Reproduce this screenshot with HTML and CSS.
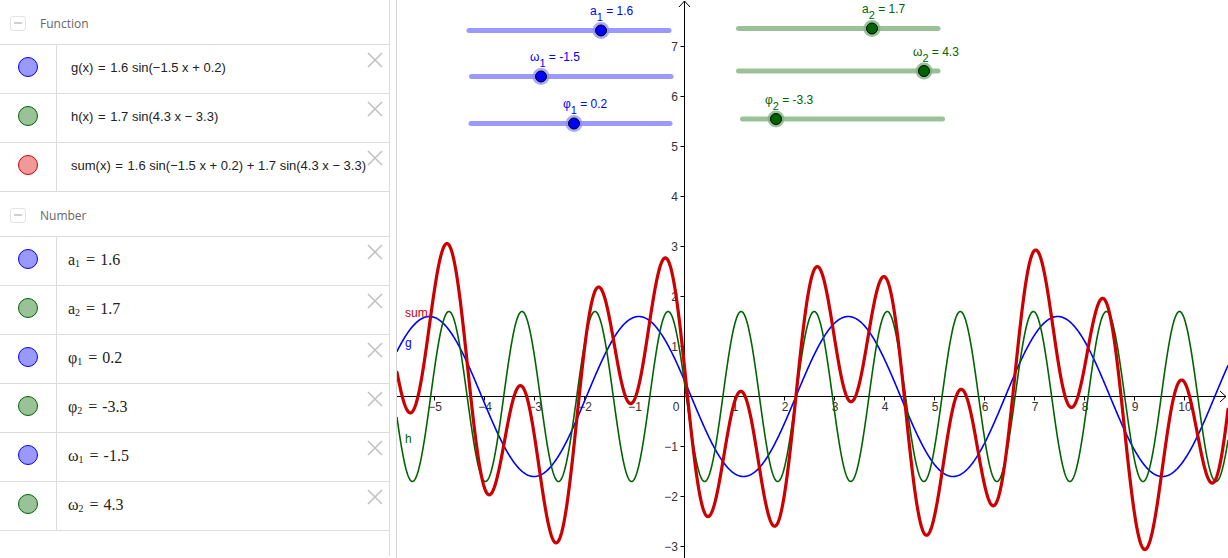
FILE: index.html
```html
<!DOCTYPE html>
<html>
<head>
<meta charset="utf-8">
<title>Sum of sines</title>
<link rel="stylesheet" href="styles.css">
</head>
<body>
<div class="app">
  <aside class="algebra">
    <div class="group-header">
      <span class="toggle"><span class="toggle-bar"></span></span>
      <span class="group-title">Function</span>
    </div>
    <div class="item">
      <div class="marble-cell"><span class="marble marble-blue"></span></div>
      <div class="item-text fn">g(x) <span class="eq">=</span> 1.6 sin(−1.5 x + 0.2)</div>
      <svg class="close" viewBox="0 0 16 16"><path d="M1 1L15 15M15 1L1 15"/></svg>
    </div>
    <div class="item">
      <div class="marble-cell"><span class="marble marble-green"></span></div>
      <div class="item-text fn">h(x) <span class="eq">=</span> 1.7 sin(4.3 x − 3.3)</div>
      <svg class="close" viewBox="0 0 16 16"><path d="M1 1L15 15M15 1L1 15"/></svg>
    </div>
    <div class="item">
      <div class="marble-cell"><span class="marble marble-red"></span></div>
      <div class="item-text fn">sum(x) <span class="eq">=</span> 1.6 sin(−1.5 x + 0.2) + 1.7 sin(4.3 x − 3.3)</div>
      <svg class="close" viewBox="0 0 16 16"><path d="M1 1L15 15M15 1L1 15"/></svg>
    </div>
    <div class="group-header">
      <span class="toggle"><span class="toggle-bar"></span></span>
      <span class="group-title">Number</span>
    </div>
    <div class="item">
      <div class="marble-cell"><span class="marble marble-blue"></span></div>
      <div class="item-text num">a<sub>1</sub><span class="eq">=</span>1.6</div>
      <svg class="close" viewBox="0 0 16 16"><path d="M1 1L15 15M15 1L1 15"/></svg>
    </div>
    <div class="item">
      <div class="marble-cell"><span class="marble marble-green"></span></div>
      <div class="item-text num">a<sub>2</sub><span class="eq">=</span>1.7</div>
      <svg class="close" viewBox="0 0 16 16"><path d="M1 1L15 15M15 1L1 15"/></svg>
    </div>
    <div class="item">
      <div class="marble-cell"><span class="marble marble-blue"></span></div>
      <div class="item-text num">φ<sub>1</sub><span class="eq">=</span>0.2</div>
      <svg class="close" viewBox="0 0 16 16"><path d="M1 1L15 15M15 1L1 15"/></svg>
    </div>
    <div class="item">
      <div class="marble-cell"><span class="marble marble-green"></span></div>
      <div class="item-text num">φ<sub>2</sub><span class="eq">=</span>-3.3</div>
      <svg class="close" viewBox="0 0 16 16"><path d="M1 1L15 15M15 1L1 15"/></svg>
    </div>
    <div class="item">
      <div class="marble-cell"><span class="marble marble-blue"></span></div>
      <div class="item-text num">ω<sub>1</sub><span class="eq">=</span>-1.5</div>
      <svg class="close" viewBox="0 0 16 16"><path d="M1 1L15 15M15 1L1 15"/></svg>
    </div>
    <div class="item">
      <div class="marble-cell"><span class="marble marble-green"></span></div>
      <div class="item-text num">ω<sub>2</sub><span class="eq">=</span>4.3</div>
      <svg class="close" viewBox="0 0 16 16"><path d="M1 1L15 15M15 1L1 15"/></svg>
    </div>
  </aside>
  <div class="splitter"></div>
  <main class="graphics">
    <svg class="canvas" width="831" height="558" viewBox="397 0 831 558">
      <g class="axis">
        <path d="M397 396.5H1226M1220 391L1226 396.5L1220 402"/>
        <path d="M684.5 558V1M679 7L684.5 1L690 7"/>
        <path d="M434.5 396.5v4M484.5 396.5v4M534.5 396.5v4M584.5 396.5v4M634.5 396.5v4M734.5 396.5v4M784.5 396.5v4M834.5 396.5v4M884.5 396.5v4M934.5 396.5v4M984.5 396.5v4M1034.5 396.5v4M1084.5 396.5v4M1134.5 396.5v4M1184.5 396.5v4"/>
        <path d="M684.5 46.5h-4M684.5 96.5h-4M684.5 146.5h-4M684.5 196.5h-4M684.5 246.5h-4M684.5 296.5h-4M684.5 346.5h-4M684.5 446.5h-4M684.5 496.5h-4M684.5 546.5h-4"/>
      </g>
      <g class="tick-x">
        <text x="435" y="411">−5</text>
        <text x="485" y="411">−4</text>
        <text x="535" y="411">−3</text>
        <text x="585" y="411">−2</text>
        <text x="635" y="411">−1</text>
        <text x="676" y="411">0</text>
        <text x="735" y="411">1</text>
        <text x="785" y="411">2</text>
        <text x="835" y="411">3</text>
        <text x="885" y="411">4</text>
        <text x="935" y="411">5</text>
        <text x="985" y="411">6</text>
        <text x="1035" y="411">7</text>
        <text x="1085" y="411">8</text>
        <text x="1135" y="411">9</text>
        <text x="1185" y="411">10</text>
      </g>
      <g class="tick-y">
        <text x="678" y="51">7</text>
        <text x="678" y="101">6</text>
        <text x="678" y="151">5</text>
        <text x="678" y="201">4</text>
        <text x="678" y="251">3</text>
        <text x="678" y="301">2</text>
        <text x="678" y="351">1</text>
        <text x="678" y="451">−1</text>
        <text x="678" y="501">−2</text>
        <text x="678" y="551">−3</text>
      </g>
      <path id="curve-g" class="curve curve-g" d=""/>
      <path id="curve-h" class="curve curve-h" d=""/>
      <path id="curve-sum" class="curve curve-sum" d=""/>
      <text class="curve-label label-sum" x="405" y="317">sum</text>
      <text class="curve-label label-g" x="405" y="347">g</text>
      <text class="curve-label label-h" x="405" y="443">h</text>

      <g class="slider slider-blue">
        <line class="track" x1="469" y1="30.5" x2="669" y2="30.5"/>
        <circle class="halo" cx="601" cy="30.5" r="8.5"/>
        <circle class="knob" cx="601" cy="30.5" r="5.5"/>
        <text class="slider-label" x="590" y="15">a<tspan class="sl-sub" dy="6">1</tspan><tspan dy="-6"> = 1.6</tspan></text>

        <line class="track" x1="471.5" y1="76.5" x2="671" y2="76.5"/>
        <circle class="halo" cx="541" cy="76.5" r="8.5"/>
        <circle class="knob" cx="541" cy="76.5" r="5.5"/>
        <text class="slider-label" x="530" y="61">ω<tspan class="sl-sub" dy="6">1</tspan><tspan dy="-6"> = -1.5</tspan></text>

        <line class="track" x1="471" y1="123.5" x2="670" y2="123.5"/>
        <circle class="halo" cx="574" cy="123.5" r="8.5"/>
        <circle class="knob" cx="574" cy="123.5" r="5.5"/>
        <text class="slider-label" x="563" y="108">φ<tspan class="sl-sub" dy="6">1</tspan><tspan dy="-6"> = 0.2</tspan></text>
      </g>
      <g class="slider slider-green">
        <line class="track" x1="738.5" y1="28.5" x2="938" y2="28.5"/>
        <circle class="halo" cx="872" cy="28.5" r="8.5"/>
        <circle class="knob" cx="872" cy="28.5" r="5.5"/>
        <text class="slider-label" x="862" y="13">a<tspan class="sl-sub" dy="6">2</tspan><tspan dy="-6"> = 1.7</tspan></text>

        <line class="track" x1="738.5" y1="71" x2="938" y2="71"/>
        <circle class="halo" cx="924" cy="71" r="8.5"/>
        <circle class="knob" cx="924" cy="71" r="5.5"/>
        <text class="slider-label" x="913" y="56">ω<tspan class="sl-sub" dy="6">2</tspan><tspan dy="-6"> = 4.3</tspan></text>

        <line class="track" x1="742.5" y1="119" x2="942.5" y2="119"/>
        <circle class="halo" cx="776" cy="119" r="8.5"/>
        <circle class="knob" cx="776" cy="119" r="5.5"/>
        <text class="slider-label" x="765" y="104">φ<tspan class="sl-sub" dy="6">2</tspan><tspan dy="-6"> = -3.3</tspan></text>
      </g>
    </svg>
  </main>
</div>
<script src="script.js"></script>
</body>
</html>
```

FILE: styles.css
```css
* { box-sizing: border-box; }
html, body { margin: 0; padding: 0; background: #fff; }
body {
  width: 1228px;
  height: 558px;
  overflow: hidden;
  font-family: "Liberation Sans", Arial, sans-serif;
  color: #222;
}
.app { display: flex; height: 558px; }

/* Algebra view */
.algebra {
  width: 390px;
  height: 556px;
  flex: none;
  border-right: 1px solid #dcdcdc;
}
.group-header {
  height: 45px;
  border-bottom: 1px solid #dcdcdc;
  display: flex;
  align-items: center;
  padding: 2px 0 0 10px;
}
.toggle {
  width: 16px;
  height: 15px;
  border: 1px solid #e2e2e2;
  border-radius: 3px;
  display: flex;
  align-items: center;
  justify-content: center;
}
.toggle-bar { width: 8px; height: 2px; background: #cfcfcf; }
.group-title {
  margin-left: 14px;
  font-family: "Open Sans", sans-serif;
  font-size: 12px;
  color: #666;
}
.item {
  position: relative;
  height: 49px;
  border-bottom: 1px solid #dcdcdc;
  display: flex;
}
.marble-cell {
  width: 57px;
  flex: none;
  border-right: 1px solid #dcdcdc;
  display: flex;
  justify-content: center;
  padding-top: 12px;
}
.marble {
  width: 20px;
  height: 20px;
  border-radius: 50%;
  border: 1px solid;
}
.marble-blue { background: #9999ff; border-color: #0000ff; }
.marble-green { background: #99c299; border-color: #006400; }
.marble-red { background: #f09999; border-color: #cc0000; }
.item-text {
  white-space: nowrap;
  line-height: 20px;
  padding-top: 13px;
  color: #222;
}
.item-text.fn {
  padding-left: 14px;
  font-family: "Liberation Sans", Arial, sans-serif;
  font-size: 13px;
}
.item-text.fn .eq { margin: 0 1px; }
.item-text.num {
  padding-left: 11px;
  font-family: "Liberation Serif", "Times New Roman", serif;
  font-size: 16px;
}
.item-text.num sub { font-size: 10px; vertical-align: -2px; }
.item-text.num .eq { margin: 0 5px 0 6px; font-size: 16px; }
.close {
  position: absolute;
  top: 7px;
  right: 6px;
  width: 16px;
  height: 16px;
  fill: none;
  stroke: #c2c2c2;
  stroke-width: 1.6;
}

.splitter { width: 6px; flex: none; }

/* Graphics view */
.graphics {
  flex: 1;
  border-left: 1px solid #d6d6d6;
}
.canvas { display: block; }
.axis path { fill: none; stroke: #000; stroke-width: 1; }
.tick-x text, .tick-y text {
  font-family: "Liberation Sans", Arial, sans-serif;
  font-size: 12px;
  fill: #333;
}
.tick-x text { text-anchor: middle; }
.tick-y text { text-anchor: end; }
.curve { fill: none; stroke-linejoin: round; stroke-linecap: round; }
.curve-g { stroke: #0000ff; stroke-width: 1.6; }
.curve-h { stroke: #006400; stroke-width: 1.6; }
.curve-sum { stroke: #cc0000; stroke-width: 3.2; }
.curve-label { font-family: "Liberation Sans", Arial, sans-serif; font-size: 12px; }
.label-sum { fill: #cc0000; }
.label-g { fill: #0000ff; }
.label-h { fill: #006400; }

.track { stroke-width: 5; stroke-linecap: round; }
.knob { stroke: #000; stroke-width: 1; }
.slider-blue .track { stroke: #9999ff; }
.slider-blue .halo { fill: #8c8cff; opacity: 0.75; }
.slider-blue .knob { fill: #0000ff; }
.slider-blue .slider-label { fill: #0000ff; }
.slider-green .track { stroke: #99c299; }
.slider-green .halo { fill: #80b380; opacity: 0.8; }
.slider-green .knob { fill: #006400; }
.slider-green .slider-label { fill: #006400; }
.slider-label { font-family: "Liberation Sans", Arial, sans-serif; font-size: 12px; }
.sl-sub { font-size: 11px; }
```

FILE: script.js
```js
(function () {
  var ox = 684.5, oy = 396.5, s = 50;
  function g(x) { return 1.6 * Math.sin(-1.5 * x + 0.2); }
  function h(x) { return 1.7 * Math.sin(4.3 * x - 3.3); }
  function sum(x) { return g(x) + h(x); }
  function plot(id, f) {
    var d = '';
    for (var px = 397; px <= 1228; px += 0.5) {
      var y = oy - s * f((px - ox) / s);
      d += (d ? 'L' : 'M') + px + ' ' + y.toFixed(2);
    }
    document.getElementById(id).setAttribute('d', d);
  }
  plot('curve-g', g);
  plot('curve-h', h);
  plot('curve-sum', sum);
})();
```
